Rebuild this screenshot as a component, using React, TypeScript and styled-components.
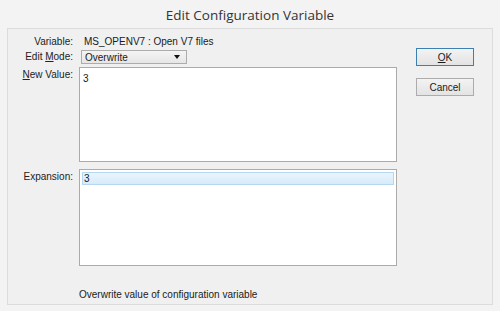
import styled, { createGlobalStyle } from "styled-components";

const GlobalStyle = createGlobalStyle`
  html, body {
    margin: 0;
    padding: 0;
    background: #f2f2f2;
  }
  * {
    box-sizing: border-box;
  }
`;

const Window = styled.div`
  width: 500px;
  height: 311px;
  background: #f3f3f3;
  display: flex;
  flex-direction: column;
  font-family: "Liberation Sans", Arial, sans-serif;
  font-size: 10px;
  color: #1a1a1a;
  overflow: hidden;
`;

const TitleBar = styled.div`
  height: 28px;
  display: flex;
  align-items: center;
  justify-content: center;
  padding-top: 2px;
`;

const Title = styled.span`
  font-family: "Open Sans", "Noto Sans", sans-serif;
  font-size: 13.5px;
  color: #333;
`;

const Panel = styled.div`
  flex: 1;
  margin: 0 7px 6px 7px;
  border: 1px solid #dcdcdc;
  background: #f0f0f0;
  display: flex;
`;

const Form = styled.div`
  display: grid;
  grid-template-columns: 65px 318px;
  grid-template-rows: 12px 14px 96px 102px;
  column-gap: 6px;
  row-gap: 2px;
  padding-top: 7px;
  align-content: start;
`;

const Label = styled.div<{ $offset?: number }>`
  text-align: right;
  line-height: 12px;
  align-self: ${(p) => (p.$offset !== undefined ? "start" : "center")};
  padding-top: ${(p) => (p.$offset !== undefined ? p.$offset : 0)}px;
  color: #222;
`;

const Value = styled.div`
  padding-left: 5px;
  line-height: 12px;
  align-self: center;
`;

const Select = styled.div`
  margin-left: 2px;
  width: 106px;
  height: 14px;
  border: 1px solid #acacac;
  background: linear-gradient(#f4f4f4, #e6e6e6);
  display: flex;
  align-items: center;
  justify-content: space-between;
  padding: 0 6px 0 3px;
`;

const Arrow = styled.span`
  width: 0;
  height: 0;
  border-left: 3.5px solid transparent;
  border-right: 3.5px solid transparent;
  border-top: 4px solid #111;
`;

const TextBox = styled.div<{ $gap: number }>`
  margin-top: ${(p) => p.$gap}px;
  border: 1px solid #ababab;
  background: #fff;
  padding: 2px 2px;
`;

const Text = styled.div`
  padding: 3px 1px 0;
  line-height: 12px;
`;

const Row = styled.div<{ $selected?: boolean }>`
  height: 13px;
  line-height: 11px;
  padding-left: 1px;
  border: 1px solid ${(p) => (p.$selected ? "#b6d7ef" : "transparent")};
  background: ${(p) =>
    p.$selected ? "linear-gradient(#eaf5fd, #d6ebfa)" : "transparent"};
`;

const Status = styled.div`
  grid-column: 2;
  margin-top: 21px;
  line-height: 12px;
`;

const Buttons = styled.div`
  display: flex;
  flex-direction: column;
  gap: 12px;
  padding-top: 19px;
  margin-left: 19px;
`;

const Button = styled.div<{ $default?: boolean }>`
  width: 58px;
  height: 18px;
  border: 1px solid ${(p) => (p.$default ? "#3c7fb1" : "#acacac")};
  background: linear-gradient(#f3f3f3, #e3e3e3);
  display: flex;
  align-items: center;
  justify-content: center;
  color: #1a1a1a;
`;

export default function App() {
  return (
    <>
      <GlobalStyle />
      <Window>
        <TitleBar>
          <Title>Edit Configuration Variable</Title>
        </TitleBar>
        <Panel>
          <Form>
            <Label>Variable:</Label>
            <Value>MS_OPENV7 : Open V7 files</Value>
            <Label>
              Edit <u>M</u>ode:
            </Label>
            <Select>
              <span>Overwrite</span>
              <Arrow />
            </Select>
            <Label $offset={3}>
              <u>N</u>ew Value:
            </Label>
            <TextBox $gap={1}>
              <Text>3</Text>
            </TextBox>
            <Label $offset={7}>Expansion:</Label>
            <TextBox $gap={5}>
              <Row $selected>3</Row>
            </TextBox>
            <Status>Overwrite value of configuration variable</Status>
          </Form>
          <Buttons>
            <Button $default>
              <span>
                <u>O</u>K
              </span>
            </Button>
            <Button>Cancel</Button>
          </Buttons>
        </Panel>
      </Window>
    </>
  );
}
